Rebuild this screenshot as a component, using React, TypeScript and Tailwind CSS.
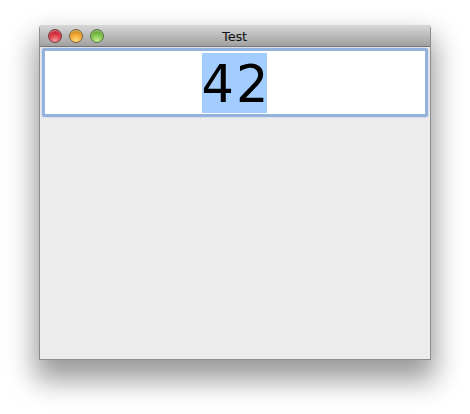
const App = () => {
    return (
        <div className="w-[470px] h-[414px] bg-white overflow-hidden pl-[39px] pt-[25px] font-['DejaVu_Sans',sans-serif]">
            <div className="w-[392px] h-[335px] flex flex-col bg-[#ececec] border border-[#8c8c8c] border-t-0 rounded-t-[4px] shadow-[0_16px_28px_4px_rgba(0,0,0,0.4)]">
                {/* Title bar */}
                <div className="relative h-[22px] shrink-0 flex items-center rounded-t-[4px] bg-gradient-to-b from-[#d8d8d8] to-[#a0a0a0] border-b border-[#777777]">
                    <div className="flex gap-[7px] pl-[8px]">
                        <span className="w-[14px] h-[14px] rounded-full border border-[#7a3a3a] shadow-[inset_0_1px_1px_rgba(255,255,255,0.5)] bg-[radial-gradient(circle_at_50%_90%,#f49a9c_0%,#dc3240_55%,#96141f_100%)]"></span>
                        <span className="w-[14px] h-[14px] rounded-full border border-[#80622f] shadow-[inset_0_1px_1px_rgba(255,255,255,0.5)] bg-[radial-gradient(circle_at_50%_90%,#ffe07e_0%,#f0a42c_55%,#a8680e_100%)]"></span>
                        <span className="w-[14px] h-[14px] rounded-full border border-[#54783a] shadow-[inset_0_1px_1px_rgba(255,255,255,0.5)] bg-[radial-gradient(circle_at_50%_90%,#c4ee98_0%,#7cc044_55%,#40821e_100%)]"></span>
                    </div>
                    <span className="absolute inset-x-0 top-[1px] text-center text-[13px] leading-[22px] tracking-[-0.2px] pr-[1px] text-[#111111]">Test</span>
                </div>
                {/* Text field */}
                <div className="mx-[2px] mt-[1px] h-[69px] flex items-center justify-center bg-white border-[3px] border-[#93b2dc] rounded-[2px] shadow-[0_0_2px_rgba(130,165,220,0.6)]">
                    <span className="block h-[60px] w-[65px] mr-[2px] bg-[#a3cdfe] text-center text-[51px] leading-[63px] tracking-[2px] text-black">42</span>
                </div>
            </div>
        </div>
    );
};
export default App;
